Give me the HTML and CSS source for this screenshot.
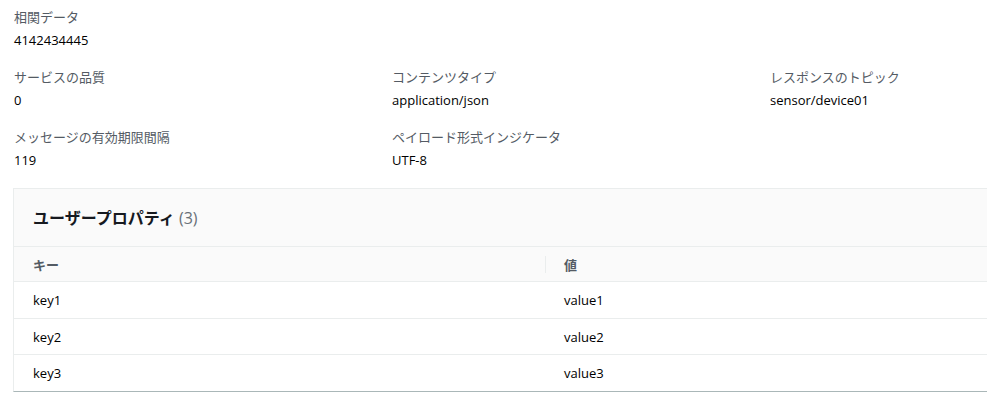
FILE: index.html
```html
<!DOCTYPE html>
<html lang="ja">
<head>
<meta charset="utf-8">
<title>Message details</title>
<link rel="stylesheet" href="styles.css">
</head>
<body>
<div class="page">
  <div class="kv">
    <div class="item">
      <div class="label">相関データ</div>
      <div class="value">4142434445</div>
    </div>
    <div class="item empty"></div>
    <div class="item empty"></div>
    <div class="item">
      <div class="label">サービスの品質</div>
      <div class="value">0</div>
    </div>
    <div class="item">
      <div class="label">コンテンツタイプ</div>
      <div class="value">application/json</div>
    </div>
    <div class="item">
      <div class="label">レスポンスのトピック</div>
      <div class="value">sensor/device01</div>
    </div>
    <div class="item">
      <div class="label">メッセージの有効期限間隔</div>
      <div class="value">119</div>
    </div>
    <div class="item">
      <div class="label">ペイロード形式インジケータ</div>
      <div class="value">UTF-8</div>
    </div>
  </div>

  <div class="card">
    <div class="card-header">
      <h2 class="card-title">ユーザープロパティ <span class="count">(3)</span></h2>
    </div>
    <table class="table">
      <thead>
        <tr>
          <th class="col-key">キー</th>
          <th class="col-val"><span class="divider"></span>値</th>
        </tr>
      </thead>
      <tbody>
        <tr><td>key1</td><td class="val">value1</td></tr>
        <tr class="short"><td>key2</td><td class="val">value2</td></tr>
        <tr><td>key3</td><td class="val">value3</td></tr>
      </tbody>
    </table>
  </div>
</div>
</body>
</html>
```

FILE: styles.css
```css
html, body {
  margin: 0;
  padding: 0;
  background: #ffffff;
  overflow: hidden;
}

body {
  font-family: "Open Sans", "Noto Sans CJK JP", sans-serif;
  font-size: 14px;
  color: #16191f;
}

.page {
  padding: 7px 0 0 14px;
}

.kv {
  display: grid;
  grid-template-columns: 378px 378px 378px;
  row-gap: 16px;
}

.label {
  font-size: 13px;
  line-height: 20px;
  color: #545b64;
  margin-bottom: 2px;
}

.value {
  font-size: 13px;
  line-height: 22px;
  color: #000000;
}

.card {
  margin-top: 17px;
  width: 1000px;
  border-left: 1px solid #eaeded;
  border-top: 1px solid #eaeded;
  border-bottom: 1px solid #aab7b8;
  margin-left: -1px;
}

.card-header {
  background: #fafafa;
  height: 57px;
  display: flex;
  align-items: center;
  padding-left: 19px;
  border-bottom: 1px solid #eaeded;
}

.card-title {
  margin: 0;
  font-size: 16px;
  font-weight: 700;
  color: #16191f;
  line-height: 22px;
}

.count {
  font-weight: 400;
  color: #687078;
}

.table {
  width: 100%;
  border-collapse: collapse;
}

.table th {
  background: #fafafa;
  text-align: left;
  font-size: 13px;
  font-weight: 700;
  color: #545b64;
  height: 34px;
  padding: 0 0 0 19px;
  border-bottom: 1px solid #eaeded;
}

.table th.col-key {
  width: 512px;
}

.table th.col-val {
  position: relative;
}

.divider {
  position: absolute;
  left: 0;
  top: 9px;
  height: 17px;
  width: 1px;
  background: #eaeded;
}

.table td {
  font-size: 13px;
  height: 36px;
  padding: 0 0 0 19px;
  border-bottom: 1px solid #eaeded;
  color: #000000;
}

.table tr.short td {
  height: 35px;
}

.table tbody tr:last-child td {
  border-bottom: none;
}
```
